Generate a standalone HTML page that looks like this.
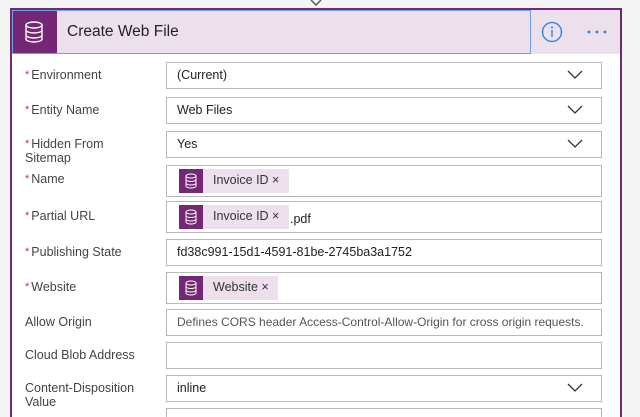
<!DOCTYPE html>
<html style="overflow:hidden;height:417px"><head><style>
body{margin:0;width:640px;height:417px;overflow:hidden;background:#f4f4f4;font-family:"Segoe UI","Liberation Sans",sans-serif;position:relative}
.card{position:absolute;left:10px;top:8px;width:608px;height:420px;border:2px solid #742774;border-bottom:none;background:#fff}
.hdr{position:absolute;left:0;top:0;width:608px;height:44px;background:#ece0ec}
.ico{position:absolute;left:0;top:0;width:45px;height:44px;background:#742774}
.tbox{position:absolute;left:0;top:0;width:517px;height:42px;border:1px solid #6fa0e8}
.title{position:absolute;left:55px;top:13px;font-size:15.5px;color:#222}
.lab{position:absolute;left:25px;font-size:12.5px;color:#444;line-height:14px}
.lab b{color:#c4314b;font-weight:normal;font-size:11px;vertical-align:top;margin-right:2px}
.inp{position:absolute;left:166px;width:436px;border:1px solid #b8b8b8;background:#fff;font-size:12.5px;color:#222;box-sizing:border-box}
.inp span.t{position:absolute;left:10px;top:5px;white-space:nowrap}
.chev{position:absolute;right:18px;top:7px}
.tok{position:absolute;top:3px;height:24px;background:#ece0ec;font-size:12.5px;color:#333}
.tok .ti{position:absolute;left:0;top:0;width:24px;height:24px;background:#742774}
.tok .tt{position:absolute;left:34px;top:4px;white-space:nowrap}
</style></head><body>
<svg style="position:absolute;left:308px;top:0" width="16" height="8"><path d="M3 0 L8 5 L13 0" fill="none" stroke="#555" stroke-width="1.5"/></svg>
<div class="card">
<div class="hdr">
<div class="ico"><svg width="45" height="44"><g fill="none" stroke="#fff" stroke-width="1.4"><ellipse cx="22" cy="15" rx="8" ry="3"/><path d="M14 15v14c0 1.7 3.6 3 8 3s8-1.3 8-3V15M14 20c0 1.7 3.6 3 8 3s8-1.3 8-3M14 25c0 1.7 3.6 3 8 3s8-1.3 8-3"/></g></svg></div>
<div class="tbox"></div>
<div class="title">Create Web File</div>
<svg style="position:absolute;left:529px;top:11px" width="22" height="22"><circle cx="11" cy="11" r="9.5" fill="none" stroke="#2b7cd3" stroke-width="1.3"/><circle cx="11" cy="6.5" r="1" fill="#2b7cd3"/><path d="M11 9v7" stroke="#2b7cd3" stroke-width="1.3"/></svg>
<svg style="position:absolute;left:575px;top:20px" width="22" height="4"><circle cx="2" cy="2" r="1.4" fill="#2b7cd3"/><circle cx="10" cy="2" r="1.4" fill="#2b7cd3"/><circle cx="18" cy="2" r="1.4" fill="#2b7cd3"/></svg>
</div>
</div>

<div class="lab" style="top:68px"><b>*</b>Environment</div>
<div class="inp" style="top:62px;height:27px"><span class="t">(Current)</span><svg class="chev" width="16" height="10"><path d="M1 1l7 7 7-7" fill="none" stroke="#333" stroke-width="1.3"/></svg></div>
<div class="lab" style="top:103px"><b>*</b>Entity Name</div>
<div class="inp" style="top:97px;height:27px"><span class="t">Web Files</span><svg class="chev" width="16" height="10"><path d="M1 1l7 7 7-7" fill="none" stroke="#333" stroke-width="1.3"/></svg></div>
<div class="lab" style="top:137px"><b>*</b>Hidden From<br>Sitemap</div>
<div class="inp" style="top:131px;height:27px"><span class="t">Yes</span><svg class="chev" width="16" height="10"><path d="M1 1l7 7 7-7" fill="none" stroke="#333" stroke-width="1.3"/></svg></div>
<div class="lab" style="top:172px"><b>*</b>Name</div>
<div class="inp" style="top:165px;height:32px"><div class="tok" style="left:12px;width:110px"><div class="ti"><svg width="24" height="24"><g fill="none" stroke="#fff" stroke-width="1"><ellipse cx="12" cy="7" rx="5" ry="2"/><path d="M7 7v10c0 1.1 2.2 2 5 2s5-.9 5-2V7M7 10.5c0 1.1 2.2 2 5 2s5-.9 5-2M7 14c0 1.1 2.2 2 5 2s5-.9 5-2"/></g></svg></div><span class="tt">Invoice ID ×</span></div></div>
<div class="lab" style="top:209px"><b>*</b>Partial URL</div>
<div class="inp" style="top:201px;height:32px"><div class="tok" style="left:12px;width:110px"><div class="ti"><svg width="24" height="24"><g fill="none" stroke="#fff" stroke-width="1"><ellipse cx="12" cy="7" rx="5" ry="2"/><path d="M7 7v10c0 1.1 2.2 2 5 2s5-.9 5-2V7M7 10.5c0 1.1 2.2 2 5 2s5-.9 5-2M7 14c0 1.1 2.2 2 5 2s5-.9 5-2"/></g></svg></div><span class="tt">Invoice ID ×</span></div><span style="position:absolute;left:123px;top:10px">.pdf</span></div>
<div class="lab" style="top:245px"><b>*</b>Publishing State</div>
<div class="inp" style="top:239px;height:27px"><span class="t">fd38c991-15d1-4591-81be-2745ba3a1752</span></div>
<div class="lab" style="top:280px"><b>*</b>Website</div>
<div class="inp" style="top:272px;height:32px"><div class="tok" style="left:12px;width:99px"><div class="ti"><svg width="24" height="24"><g fill="none" stroke="#fff" stroke-width="1"><ellipse cx="12" cy="7" rx="5" ry="2"/><path d="M7 7v10c0 1.1 2.2 2 5 2s5-.9 5-2V7M7 10.5c0 1.1 2.2 2 5 2s5-.9 5-2M7 14c0 1.1 2.2 2 5 2s5-.9 5-2"/></g></svg></div><span class="tt">Website ×</span></div></div>
<div class="lab" style="top:315px">Allow Origin</div>
<div class="inp" style="top:309px;height:27px;color:#555;font-size:12px"><span class="t">Defines CORS header Access-Control-Allow-Origin for cross origin requests.</span></div>
<div class="lab" style="top:348px">Cloud Blob Address</div>
<div class="inp" style="top:342px;height:27px"></div>
<div class="lab" style="top:381px">Content-Disposition<br>Value</div>
<div class="inp" style="top:375px;height:27px"><span class="t">inline</span><svg class="chev" width="16" height="10"><path d="M1 1l7 7 7-7" fill="none" stroke="#333" stroke-width="1.3"/></svg></div>
<div class="inp" style="top:408px;height:27px"></div>
</body></html>
